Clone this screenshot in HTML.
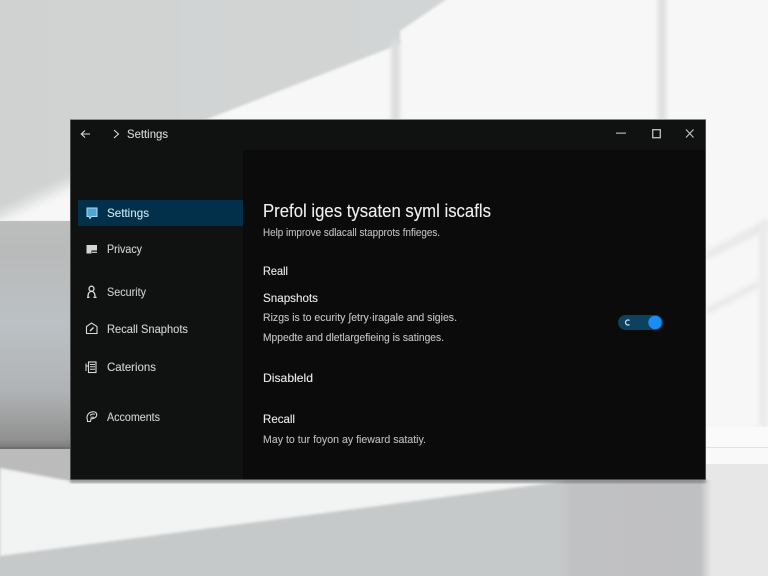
<!DOCTYPE html>
<html lang="en">
<head>
<meta charset="utf-8">
<title>Settings</title>
<style>
html,body{margin:0;padding:0;background:#f7f7f7}
body{width:768px;height:576px;overflow:hidden}
svg{display:block}
text{font-family:"Liberation Sans",sans-serif;stroke-width:.12px}
</style>
</head>
<body>
<svg width="768" height="576" viewBox="0 0 768 576" xmlns="http://www.w3.org/2000/svg">
<defs>
<linearGradient id="sofa" x1="0" y1="0" x2="0" y2="1">
<stop offset="0" stop-color="#bdbebe"/>
<stop offset=".12" stop-color="#b9baba"/>
<stop offset=".45" stop-color="#bbc1c4"/>
<stop offset=".75" stop-color="#b0b3b5"/>
<stop offset=".96" stop-color="#919191"/>
<stop offset="1" stop-color="#7a7a7a"/>
</linearGradient>
<linearGradient id="shade" x1="0" y1="0" x2="1" y2="0">
<stop offset="0" stop-color="#d0d2d2"/>
<stop offset="1" stop-color="#d3d5d5"/>
</linearGradient>
<linearGradient id="floorR" x1="0" y1="0" x2="1" y2="0">
<stop offset="0" stop-color="#c6c9ca"/>
<stop offset=".08" stop-color="#c0c1c2"/>
<stop offset=".92" stop-color="#bfc0c1"/>
<stop offset="1" stop-color="#e7e7e7"/>
</linearGradient>
<filter id="b1" x="-20%" y="-20%" width="140%" height="140%"><feGaussianBlur stdDeviation="1.2"/></filter>
<filter id="b2" x="-50%" y="-20%" width="200%" height="140%"><feGaussianBlur stdDeviation="2.5"/></filter>
<filter id="b3" x="-20%" y="-50%" width="140%" height="200%"><feGaussianBlur stdDeviation="4"/></filter>
<filter id="s"><feGaussianBlur stdDeviation=".3"/></filter>
</defs>

<!-- wall -->
<rect width="768" height="576" fill="#f7f7f7"/>
<polygon points="-10,-10 460,-10 400,31 400,44 205,120 -10,222" fill="url(#shade)" filter="url(#b1)"/>
<path d="M-5 219 150 146" stroke="#e4e5e5" stroke-width="9" fill="none" filter="url(#b3)"/>
<rect x="391" y="40" width="9" height="82" fill="#dcdddd" filter="url(#b2)"/>
<rect x="658" y="-10" width="8" height="132" fill="#dedede" filter="url(#b2)"/>
<!-- right-hand shadows -->
<polygon points="706,252 768,218 768,230 706,260" fill="#e9e9e9" filter="url(#b2)"/>
<polygon points="706,308 760,280 760,287 706,315" fill="#e8e8e8" filter="url(#b2)"/>
<rect x="759" y="222" width="9" height="205" fill="#ebebeb" filter="url(#b2)"/>
<!-- right ledge -->
<rect x="706" y="427" width="62" height="20" fill="#fafafa"/>
<rect x="706" y="447" width="62" height="1" fill="#e2e2e2"/>
<rect x="706" y="448" width="62" height="16" fill="#f9f9f9"/>
<rect x="706" y="464" width="62" height="112" fill="#e7e7e7"/>
<!-- left object -->
<rect x="0" y="220" width="72" height="1" fill="#f2f2f2"/>
<rect x="0" y="221" width="72" height="227" fill="url(#sofa)"/>
<rect x="0" y="447" width="72" height="2" fill="#6f6f6f"/>
<rect x="0" y="449" width="72" height="34" fill="#bbbbbc"/>
<!-- floor -->
<rect x="0" y="480" width="706" height="96" fill="#c6c9ca"/>
<rect x="560" y="480" width="152" height="96" fill="url(#floorR)"/>
<polygon points="0,468 70,481 566,481 0,556" fill="#f2f3f3" filter="url(#b1)"/>
<rect x="70" y="479" width="636" height="4" fill="#555" opacity=".5" filter="url(#b1)"/>

<!-- window -->
<rect x="70" y="119" width="636" height="361" fill="#8c8c8c"/>
<rect x="70.500" y="120" width="635" height="359.500" fill="#101111"/>
<rect x="243" y="150" width="462.500" height="329.500" fill="#0b0b0b"/>
<rect x="78" y="200" width="165" height="26" fill="#02304a"/>

<g filter="url(#s)">
<!-- title bar -->
<path d="M90 134H81.500M85 130.500 81.300 134 85 137.500" fill="none" stroke="#dcdcdc" stroke-width="1.100"/>
<path d="M114 130 118.500 134 114 138" fill="none" stroke="#dcdcdc" stroke-width="1.100"/>
<text x="127" y="138" font-size="12" fill="#d4d4d4" stroke="#d4d4d4" textLength="41" lengthAdjust="spacingAndGlyphs">Settings</text>
<rect x="616" y="132.500" width="10" height="1.300" fill="#a8a8a8"/>
<rect x="652.700" y="129.700" width="7.600" height="8" fill="none" stroke="#b4b4b4" stroke-width="1.400"/>
<path d="M686 129.500 693.500 137.500M693.500 129.500 686 137.500" fill="none" stroke="#bdbdbd" stroke-width="1.200"/>

<!-- sidebar icons -->
<path d="M87 208H97V216.500H91.500L90 218.500 89 216.500H87Z" fill="#4ea6d6" stroke="#a8dcf4" stroke-width="1"/>
<path d="M86.500 245H97V250.500H91.500V253.500H86.500Z" fill="#d4d4d4"/>
<path d="M92 252.300H97" stroke="#cfcfcf" stroke-width="1.200"/>
<g fill="none" stroke="#dadada" stroke-width="1.300">
<circle cx="91.500" cy="288.700" r="2.500"/>
<path d="M88 296.500C88 292.500 90 291.300 91.500 291.300S95 292.500 95 296.500M87 297.300H89.500M93.500 297.300H96.500"/>
<path d="M86.500 333.500V326.500L91.500 323 97 326.500V333.500Z" stroke-width="1.100"/>
<path d="M90 331 93.500 327.500" stroke-width="1.400"/>
<rect x="88.500" y="362" width="7.500" height="10.500" stroke-width="1.100"/>
<path d="M90 364.500H95M90 366.800H95M90 369.200H95M86 363.500V371M86 366H88" stroke-width="1"/>
<path d="M87.500 420C85.800 416 88.500 412.200 92.500 411.800 95.500 411.500 97 413 96.700 415.200 96.300 418 93 418.800 91 418.800L90.500 421.500 87.500 421.500Z" stroke-width="1.100"/>
<path d="M90 415.500C91.500 414 93.500 413.800 95 414.200M90.500 417.200H94" stroke-width=".9"/>
</g>

<!-- sidebar labels -->
<text x="107" y="217" font-size="12" fill="#c8e4f0" stroke="#c8e4f0" textLength="42" lengthAdjust="spacingAndGlyphs">Settings</text>
<text x="107" y="253" font-size="12" fill="#cfcfcf" stroke="#cfcfcf" textLength="35" lengthAdjust="spacingAndGlyphs">Privacy</text>
<text x="107" y="296" font-size="12" fill="#cacaca" stroke="#cacaca" textLength="39" lengthAdjust="spacingAndGlyphs">Security</text>
<text x="107" y="333" font-size="12" fill="#cfcfcf" stroke="#cfcfcf" textLength="81" lengthAdjust="spacingAndGlyphs">Recall Snaphots</text>
<text x="107" y="371" font-size="12" fill="#cfcfcf" stroke="#cfcfcf" textLength="49" lengthAdjust="spacingAndGlyphs">Caterions</text>
<text x="107" y="421" font-size="12" fill="#cfcfcf" stroke="#cfcfcf" textLength="53" lengthAdjust="spacingAndGlyphs">Accoments</text>

<!-- content -->
<text x="263" y="217" font-size="18" fill="#efefef" stroke="#efefef" textLength="228" lengthAdjust="spacingAndGlyphs">Prefol iges tysaten syml iscafls</text>
<text x="263" y="236" font-size="11" fill="#bcbcbc" stroke="#bcbcbc" textLength="177" lengthAdjust="spacingAndGlyphs">Help improve sdlacall stapprots fnfieges.</text>
<text x="263" y="275" font-size="12" fill="#e8e8e8" stroke="#e8e8e8" textLength="25" lengthAdjust="spacingAndGlyphs">Reall</text>
<text x="263" y="302" font-size="12" fill="#e8e8e8" stroke="#e8e8e8" textLength="55" lengthAdjust="spacingAndGlyphs">Snapshots</text>
<text x="263" y="321" font-size="11" fill="#c0c0c0" stroke="#c0c0c0" textLength="194" lengthAdjust="spacingAndGlyphs">Rizgs is to ecurity ∫etry·iragale and sigies.</text>
<text x="263" y="341" font-size="11" fill="#c0c0c0" stroke="#c0c0c0" textLength="181" lengthAdjust="spacingAndGlyphs">Mppedte and dletlargefieing is satinges.</text>
<text x="263" y="382" font-size="12" fill="#e8e8e8" stroke="#e8e8e8" textLength="50" lengthAdjust="spacingAndGlyphs">Disableld</text>
<text x="263" y="423" font-size="12" fill="#e8e8e8" stroke="#e8e8e8" textLength="32" lengthAdjust="spacingAndGlyphs">Recall</text>
<text x="263" y="443" font-size="11" fill="#b8b8b8" stroke="#b8b8b8" textLength="163" lengthAdjust="spacingAndGlyphs">May to tur foyon ay fieward satatiy.</text>

<!-- toggle -->
<rect x="618" y="315" width="45" height="15" rx="7.500" fill="#07425f"/>
<path d="M629.500 320.500A2.500 2.500 0 1 0 629.500 324.500" fill="none" stroke="#cfe6f0" stroke-width="1.200"/>
<circle cx="655" cy="322.500" r="6.700" fill="#1a8cf5"/>
</g>
</svg>
</body>
</html>
